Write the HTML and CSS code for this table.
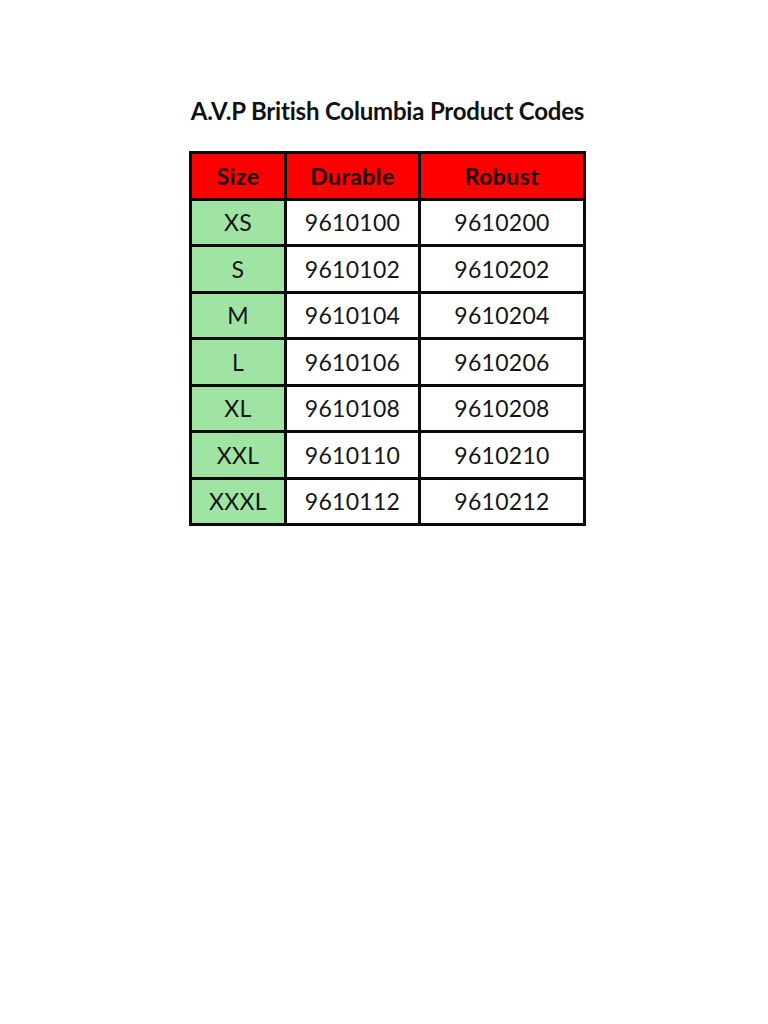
FILE: index.html
```html
<!DOCTYPE html>
<html>
<head>
<meta charset="utf-8">
<link rel="stylesheet" href="styles.css">
</head>
<body>
<main class="page">
  <h1 class="title">A.V.P British Columbia Product Codes</h1>
  <div class="table">
    <div class="cell head">Size</div>
    <div class="cell head">Durable</div>
    <div class="cell head">Robust</div>

    <div class="cell size">XS</div>
    <div class="cell">9610100</div>
    <div class="cell">9610200</div>

    <div class="cell size">S</div>
    <div class="cell">9610102</div>
    <div class="cell">9610202</div>

    <div class="cell size">M</div>
    <div class="cell">9610104</div>
    <div class="cell">9610204</div>

    <div class="cell size">L</div>
    <div class="cell">9610106</div>
    <div class="cell">9610206</div>

    <div class="cell size">XL</div>
    <div class="cell">9610108</div>
    <div class="cell">9610208</div>

    <div class="cell size">XXL</div>
    <div class="cell">9610110</div>
    <div class="cell">9610210</div>

    <div class="cell size">XXXL</div>
    <div class="cell">9610112</div>
    <div class="cell">9610212</div>
  </div>
</main>
</body>
</html>
```

FILE: styles.css
```css
html, body {
  margin: 0;
  padding: 0;
  background: #ffffff;
}

body {
  font-family: Lato, "Open Sans", "Liberation Sans", sans-serif;
  color: #111111;
}

.page {
  display: flex;
  flex-direction: column;
  align-items: center;
  padding-left: 7px;
  padding-top: 96px;
}

.title {
  margin: 0;
  font-size: 24px;
  font-weight: 700;
  line-height: 30px;
  letter-spacing: -0.2px;
  color: #111111;
}

.table {
  margin-top: 25px;
  display: grid;
  grid-template-columns: 92px 131px 162px;
  grid-auto-rows: 43.5px;
  gap: 3px;
  padding: 3px;
  background: #0a0a0a;
}

.cell {
  display: flex;
  align-items: center;
  justify-content: center;
  background: #ffffff;
  font-size: 23px;
  letter-spacing: 0.3px;
  color: #151515;
}

.head {
  background: #ff0000;
  font-weight: 700;
  font-size: 23px;
  letter-spacing: 0.4px;
  color: #1a0000;
}

.size {
  background: #a0e4a4;
}
```
